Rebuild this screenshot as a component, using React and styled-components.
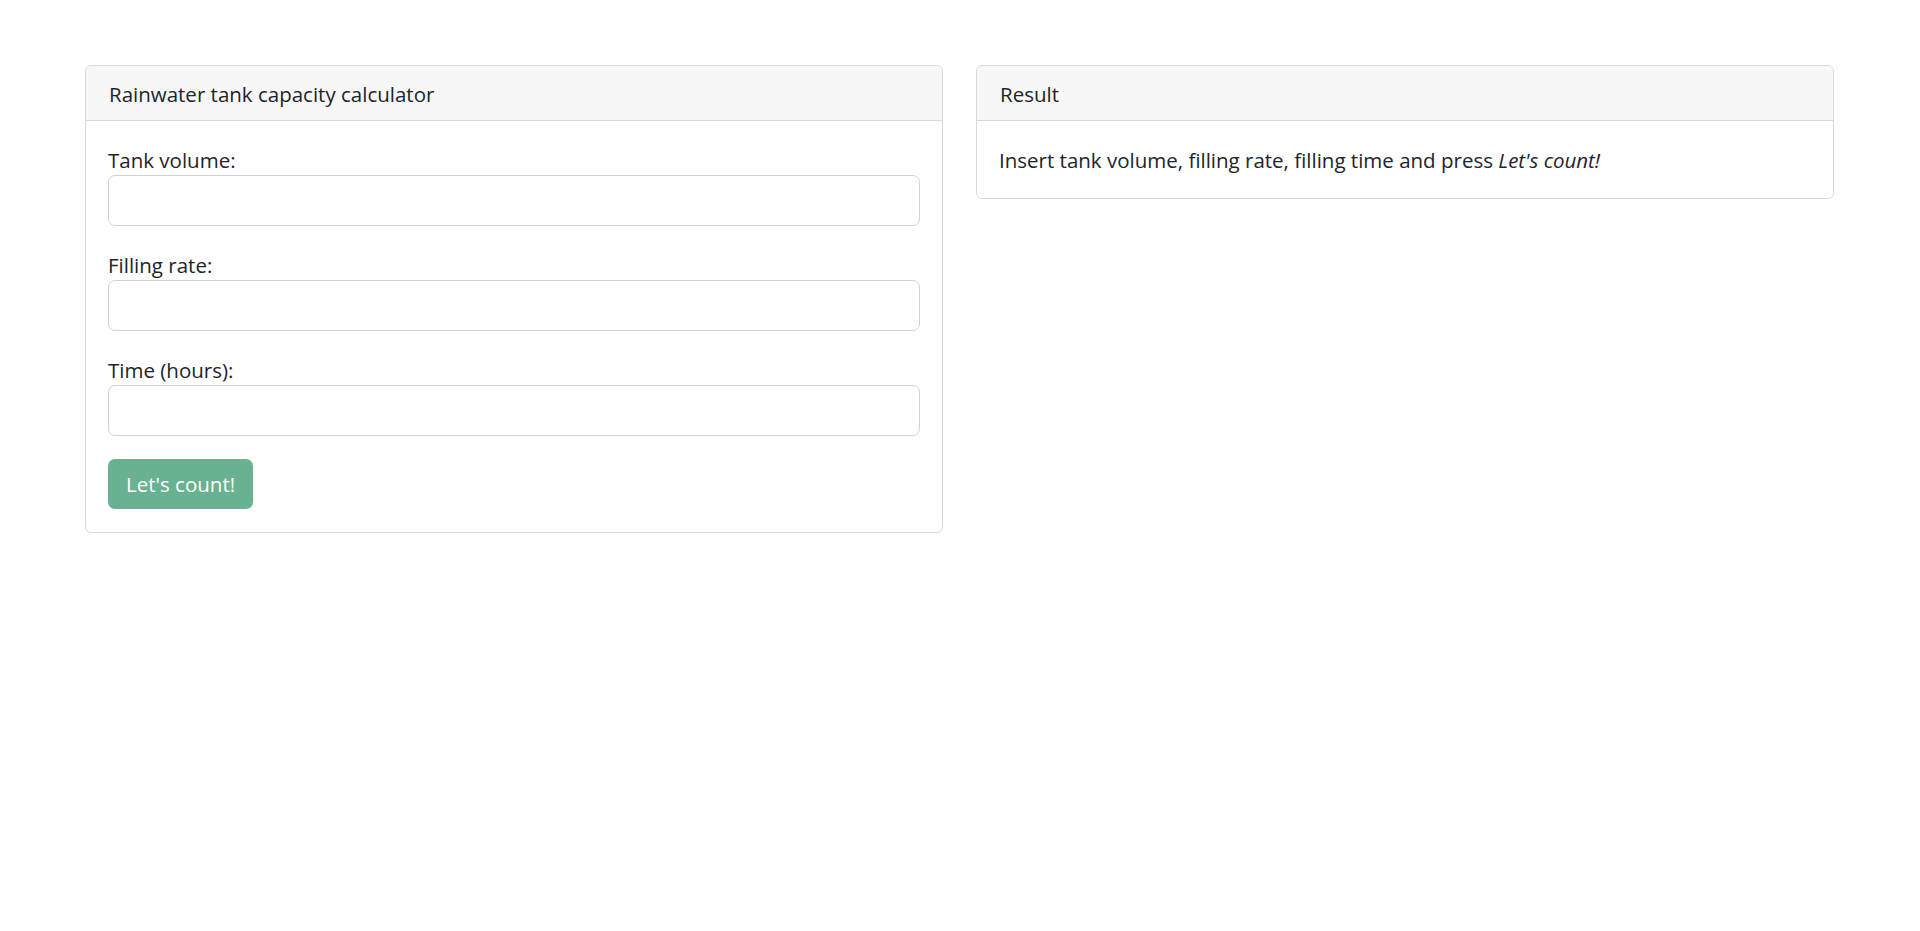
import styled, { createGlobalStyle } from "styled-components";

const GlobalStyle = createGlobalStyle`
  * {
    box-sizing: border-box;
  }
  body {
    margin: 0;
    background: #fff;
    color: #212529;
    font-family: "Segoe UI", "Open Sans", "Liberation Sans", sans-serif;
    font-size: 20.5px;
    line-height: 30px;
  }
`;

const Page = styled.div`
  display: grid;
  grid-template-columns: 1fr 1fr;
  gap: 33px;
  align-items: start;
  padding: 65px 86px 0 85px;
`;

const Card = styled.section`
  border: 1px solid #d9d9d9;
  border-radius: 6px;
  background: #fff;
  overflow: hidden;
`;

const CardHeader = styled.header`
  background: #f7f7f7;
  border-bottom: 1px solid #d9d9d9;
  padding: 13px 23px 11px;
  line-height: 30px;
`;

const CardBody = styled.div`
  padding: 24px 22px 23px 22px;
`;

const Field = styled.div`
  display: flex;
  flex-direction: column;
  margin-bottom: 24px;

  &:last-of-type {
    margin-bottom: 23px;
  }
`;

const Label = styled.label`
  line-height: 30px;
`;

const Input = styled.input`
  height: 51px;
  width: 100%;
  border: 1px solid #ced4da;
  border-radius: 7px;
  padding: 0 15px;
  font: inherit;
  color: #212529;
  outline: none;
`;

const Button = styled.button`
  height: 50px;
  padding: 0 18px;
  border: none;
  border-radius: 7px;
  background: #69b291;
  color: #fff;
  font: inherit;
  cursor: pointer;
`;

const Message = styled.p`
  margin: 0;
  line-height: 30px;
`;

const fields = [
  { id: "volume", label: "Tank volume:" },
  { id: "rate", label: "Filling rate:" },
  { id: "time", label: "Time (hours):" },
];

export default function App() {
  return (
    <>
      <GlobalStyle />
      <Page>
        <Card>
          <CardHeader>Rainwater tank capacity calculator</CardHeader>
          <CardBody>
            {fields.map((f) => (
              <Field key={f.id}>
                <Label htmlFor={f.id}>{f.label}</Label>
                <Input id={f.id} type="text" />
              </Field>
            ))}
            <Button type="button">Let's count!</Button>
          </CardBody>
        </Card>
        <Card>
          <CardHeader>Result</CardHeader>
          <CardBody>
            <Message>
              Insert tank volume, filling rate, filling time and press{" "}
              <em>Let's count!</em>
            </Message>
          </CardBody>
        </Card>
      </Page>
    </>
  );
}
